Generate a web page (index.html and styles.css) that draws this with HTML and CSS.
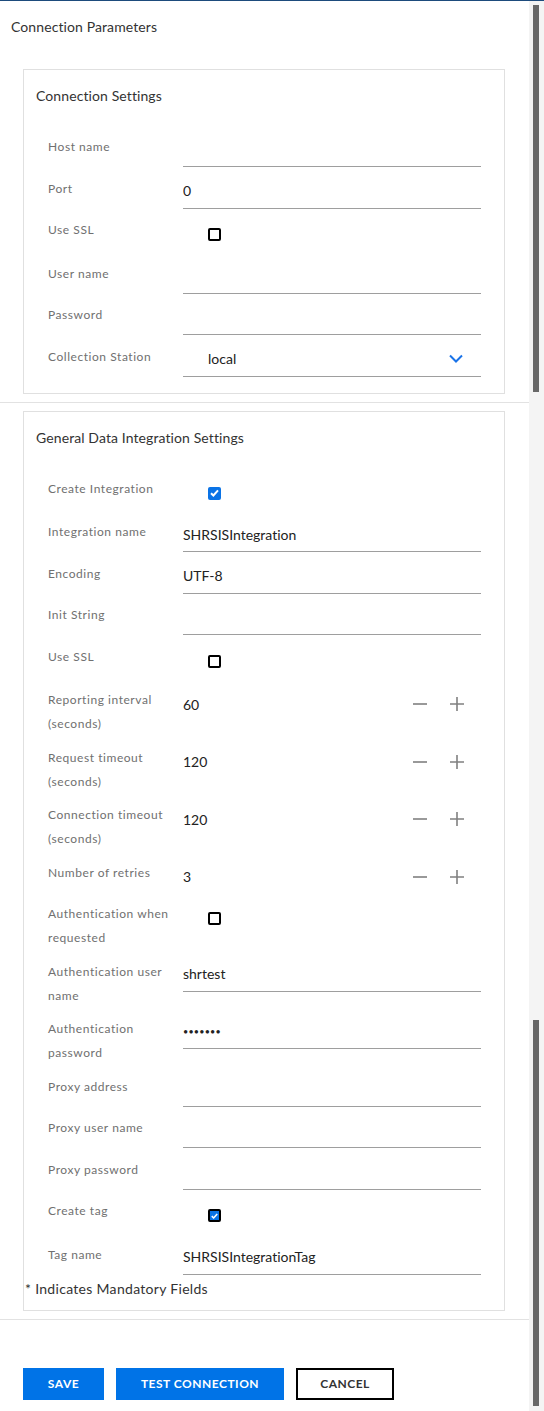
FILE: index.html
```html
<!DOCTYPE html>
<html lang="en">
<head>
  <meta charset="UTF-8" />
  <meta name="viewport" content="width=device-width, initial-scale=1.0"/>
  <title>Connection Parameters</title>
  <link rel="stylesheet" href="styles.css">
</head>
<body>

<div class="page">
  <div class="panel">
    <div class="panel-title">Connection Parameters</div>

    <!-- connection settings -->
    <div class="section">
      <div class="card">
        <div class="card-title">Connection Settings</div>
        <div class="fields">
          <div class="row">
            <label for="host">Host name</label>
            <input type="text" id="host" />
          </div>
          <div class="row">
            <label for="port">Port</label>
            <input type="text" id="port" value="0" />
          </div>
          <div class="row row-check">
            <label>Use SSL</label>
            <div class="check-cell"><span class="checkbox"></span></div>
          </div>
          <div class="row">
            <label for="user">User name</label>
            <input type="text" id="user" />
          </div>
          <div class="row">
            <label for="password">Password</label>
            <input type="password" id="password" />
          </div>
          <div class="row">
            <label>Collection Station</label>
            <div class="select">
              <span>local</span>
              <svg width="16" height="9" viewBox="0 0 16 9"><path d="M2 1.5 L8 7.5 L14 1.5" fill="none" stroke="#1a73e8" stroke-width="2"/></svg>
            </div>
          </div>
        </div>
      </div>
    </div>

    <!-- integration settings -->
    <div class="section">
      <div class="card">
        <div class="card-title">General Data Integration Settings</div>
        <div class="fields">
          <div class="row row-check">
            <label>Create Integration</label>
            <div class="check-cell"><span class="checkbox checked">
              <svg width="9" height="8" viewBox="0 0 9 8"><path d="M1 4.2 L3.4 6.5 L8 1.3" fill="none" stroke="#fff" stroke-width="2"/></svg>
            </span></div>
          </div>
          <div class="row">
            <label for="intname">Integration name</label>
            <input type="text" id="intname" value="SHRSISIntegration" />
          </div>
          <div class="row">
            <label for="encoding">Encoding</label>
            <input type="text" id="encoding" value="UTF-8" />
          </div>
          <div class="row">
            <label for="init">Init String</label>
            <input type="text" id="init" />
          </div>
          <div class="row row-check">
            <label>Use SSL</label>
            <div class="check-cell"><span class="checkbox"></span></div>
          </div>
          <div class="row">
            <label>Reporting interval (seconds)</label>
            <div class="stepper">
              <span class="value">60</span>
              <svg width="14" height="14" viewBox="0 0 14 14"><path d="M0 7 H14" stroke="#808080" stroke-width="1.6"/></svg>
              <svg width="14" height="14" viewBox="0 0 14 14"><path d="M0 7 H14 M7 0 V14" stroke="#808080" stroke-width="1.6"/></svg>
            </div>
          </div>
          <div class="row">
            <label>Request timeout (seconds)</label>
            <div class="stepper">
              <span class="value">120</span>
              <svg width="14" height="14" viewBox="0 0 14 14"><path d="M0 7 H14" stroke="#808080" stroke-width="1.6"/></svg>
              <svg width="14" height="14" viewBox="0 0 14 14"><path d="M0 7 H14 M7 0 V14" stroke="#808080" stroke-width="1.6"/></svg>
            </div>
          </div>
          <div class="row">
            <label>Connection timeout (seconds)</label>
            <div class="stepper">
              <span class="value">120</span>
              <svg width="14" height="14" viewBox="0 0 14 14"><path d="M0 7 H14" stroke="#808080" stroke-width="1.6"/></svg>
              <svg width="14" height="14" viewBox="0 0 14 14"><path d="M0 7 H14 M7 0 V14" stroke="#808080" stroke-width="1.6"/></svg>
            </div>
          </div>
          <div class="row">
            <label>Number of retries</label>
            <div class="stepper">
              <span class="value">3</span>
              <svg width="14" height="14" viewBox="0 0 14 14"><path d="M0 7 H14" stroke="#808080" stroke-width="1.6"/></svg>
              <svg width="14" height="14" viewBox="0 0 14 14"><path d="M0 7 H14 M7 0 V14" stroke="#808080" stroke-width="1.6"/></svg>
            </div>
          </div>
          <div class="row">
            <label>Authentication when requested</label>
            <div class="check-cell"><span class="checkbox"></span></div>
          </div>
          <div class="row">
            <label for="authuser">Authentication user name</label>
            <input type="text" id="authuser" value="shrtest" />
          </div>
          <div class="row">
            <label for="authpass">Authentication password</label>
            <input type="password" id="authpass" value="shrtest" />
          </div>
          <div class="row">
            <label for="proxy">Proxy address</label>
            <input type="text" id="proxy" />
          </div>
          <div class="row">
            <label for="proxyuser">Proxy user name</label>
            <input type="text" id="proxyuser" />
          </div>
          <div class="row">
            <label for="proxypass">Proxy password</label>
            <input type="password" id="proxypass" />
          </div>
          <div class="row row-check">
            <label>Create tag</label>
            <div class="check-cell"><span class="checkbox checked focused">
              <svg width="9" height="8" viewBox="0 0 9 8"><path d="M1 4.2 L3.4 6.5 L8 1.3" fill="none" stroke="#fff" stroke-width="2"/></svg>
            </span></div>
          </div>
          <div class="row">
            <label for="tag">Tag name</label>
            <input type="text" id="tag" value="SHRSISIntegrationTag" />
          </div>
        </div>
        <div class="note">* Indicates Mandatory Fields</div>
      </div>
    </div>

    <div class="actions">
      <button class="btn btn-primary">Save</button>
      <button class="btn btn-primary">Test Connection</button>
      <button class="btn btn-outline">Cancel</button>
    </div>
  </div>

  <div class="scrollbar">
    <div class="thumb thumb-top"></div>
    <div class="thumb thumb-bottom"></div>
  </div>
</div>

</body>
</html>
```

FILE: styles.css
```css
body {
  margin: 0;
  font-family: Lato, "Open Sans", sans-serif;
  font-variant-ligatures: none;
  color: #333;
  background: #fff;
}

.page {
  display: flex;
  min-height: 100vh;
  border-top: 1px solid #1d4b7c;
}

.panel {
  flex: 1;
}

.panel-title {
  padding: 16px 11px 0;
  font-size: 14px;
  line-height: 20px;
  letter-spacing: 0.1px;
  color: #333;
}

.section {
  padding: 32px 24px 8px 23px;
  border-bottom: 1px solid #e2e2e2;
}

.section + .section {
  padding-top: 8px;
}

.card {
  border: 1px solid #e0e0e0;
}

.card-title {
  padding: 16px 12px 0;
  font-size: 14px;
  line-height: 20px;
  letter-spacing: 0.1px;
  color: #333;
}

.fields {
  display: flex;
  flex-direction: column;
  gap: 6.5px;
  padding: 26px 23px 16px 24px;
}

.card .fields:not(:last-child) {
  padding-bottom: 0;
}

.row {
  display: grid;
  grid-template-columns: 135px 298px;
  align-items: start;
}

.row label {
  padding-top: 3px;
  padding-right: 6px;
  font-size: 12px;
  line-height: 24px;
  letter-spacing: 0.55px;
  color: #707070;
}

.row input {
  box-sizing: border-box;
  width: 100%;
  height: 35px;
  margin: 0;
  padding: 0;
  border: none;
  border-bottom: 1px solid #9e9e9e;
  font-family: inherit;
  font-size: 14px;
  font-variant-ligatures: none;
  color: #222;
  background: transparent;
  outline: none;
}

.row input[type="password"] {
  font-size: 9px;
  letter-spacing: 0.2px;
}

.select {
  box-sizing: border-box;
  height: 35px;
  display: flex;
  align-items: center;
  justify-content: space-between;
  padding: 0 17px 0 25px;
  border-bottom: 1px solid #9e9e9e;
  font-size: 14px;
  color: #222;
}

.check-cell {
  height: 37px;
  padding-left: 25px;
  box-sizing: border-box;
  padding-top: 13px;
}

.checkbox {
  display: flex;
  align-items: center;
  justify-content: center;
  box-sizing: border-box;
  width: 13px;
  height: 13px;
  border: 2px solid #000;
  border-radius: 2px;
  background: #fff;
}

.checkbox.checked {
  border: none;
  background: #0a73e6;
}

.checkbox.focused {
  border: 2px solid #000;
}

.checkbox.focused svg {
  width: 7px;
}

.stepper {
  box-sizing: border-box;
  height: 35px;
  padding: 3px 17px 0 0;
  display: flex;
  align-items: center;
  gap: 23px;
}

.stepper .value {
  flex: 1;
  font-size: 14px;
  color: #222;
}

.note {
  margin-top: 4px;
  padding: 0 0 11px 1px;
  font-size: 14px;
  line-height: 20px;
  letter-spacing: 0.3px;
  color: #333;
}

.actions {
  display: flex;
  gap: 12px;
  padding: 48px 23px 12px;
}

.btn {
  height: 32px;
  padding: 0;
  border: none;
  font-family: inherit;
  font-size: 12px;
  font-weight: bold;
  letter-spacing: 0.5px;
  text-transform: uppercase;
  cursor: pointer;
}

.btn-primary {
  background: #0073e7;
  color: #fff;
}

.btn-primary:first-child {
  width: 81px;
}

.btn-primary + .btn-primary {
  width: 168px;
}

.btn-outline {
  width: 98px;
  background: #fff;
  border: 2px solid #000;
  color: #333;
}

.scrollbar {
  width: 15px;
  display: flex;
  flex-direction: column;
  padding-top: 4px;
  background: #f4f4f4;
}

.thumb {
  width: 6px;
  margin-left: 4px;
  background: #686868;
}

.thumb-top {
  height: 387px;
}

.thumb-bottom {
  margin-top: 628px;
  height: 386px;
}
```
